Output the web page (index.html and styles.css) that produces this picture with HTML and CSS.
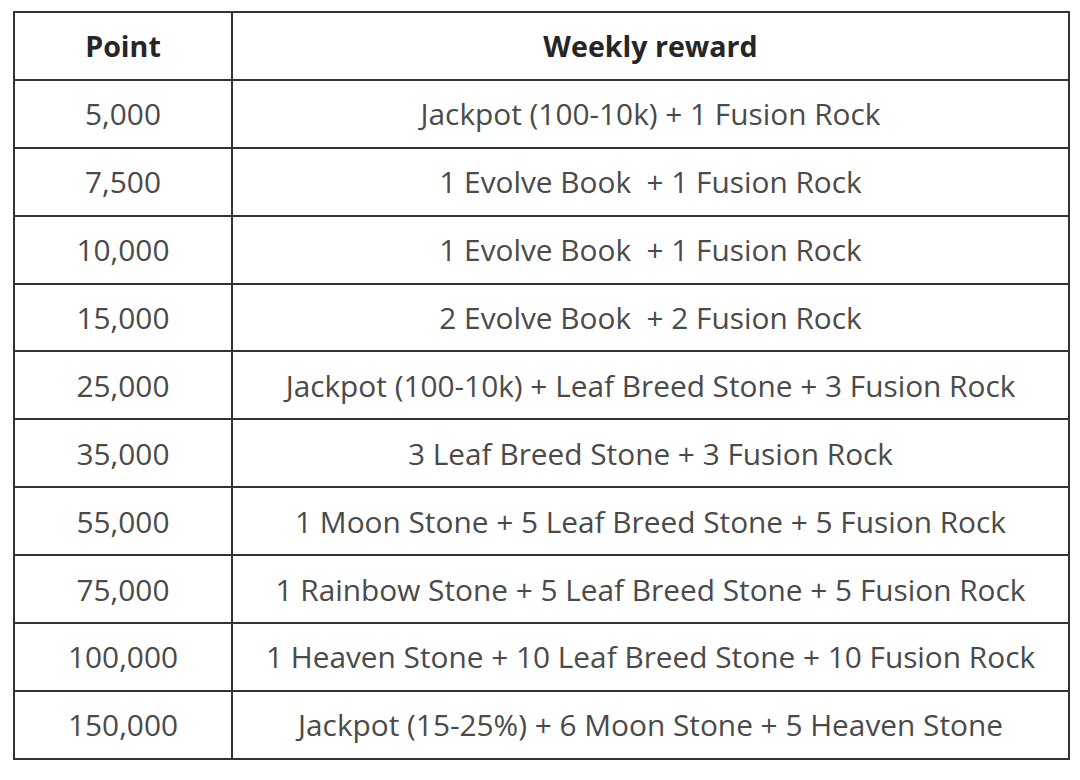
FILE: index.html
```html
<!DOCTYPE html>
<html>
<head>
<meta charset="utf-8">
<link rel="stylesheet" href="styles.css">
</head>
<body>
<table class="rewards">
  <thead>
    <tr><th class="pt">Point</th><th>Weekly reward</th></tr>
  </thead>
  <tbody>
    <tr><td>5,000</td><td>Jackpot (100-10k) + 1 Fusion Rock</td></tr>
    <tr><td>7,500</td><td>1 Evolve Book&nbsp; + 1 Fusion Rock</td></tr>
    <tr><td>10,000</td><td>1 Evolve Book&nbsp; + 1 Fusion Rock</td></tr>
    <tr><td>15,000</td><td>2 Evolve Book&nbsp; + 2 Fusion Rock</td></tr>
    <tr><td>25,000</td><td>Jackpot (100-10k) + Leaf Breed Stone + 3 Fusion Rock</td></tr>
    <tr><td>35,000</td><td>3 Leaf Breed Stone + 3 Fusion Rock</td></tr>
    <tr><td>55,000</td><td>1 Moon Stone + 5 Leaf Breed Stone + 5 Fusion Rock</td></tr>
    <tr><td>75,000</td><td>1 Rainbow Stone + 5 Leaf Breed Stone + 5 Fusion Rock</td></tr>
    <tr><td>100,000</td><td>1 Heaven Stone + 10 Leaf Breed Stone + 10 Fusion Rock</td></tr>
    <tr><td>150,000</td><td>Jackpot (15-25%) + 6 Moon Stone + 5 Heaven Stone</td></tr>
  </tbody>
</table>
</body>
</html>
```
FILE: styles.css
```css
html, body {
  margin: 0;
  padding: 0;
  background: #ffffff;
}
body {
  padding: 11px 0 0 13px;
  font-family: "Open Sans", "Noto Sans", sans-serif;
}
.rewards {
  border-collapse: collapse;
  width: 1057px;
  table-layout: fixed;
}
.rewards th, .rewards td {
  border: 2px solid #333333;
  height: 65.9px;
  padding: 0;
  text-align: center;
  vertical-align: middle;
  font-size: 29.8px;
  color: #4a4a4a;
  white-space: nowrap;
}
.rewards th {
  font-weight: 700;
  color: #262626;
  font-size: 28.6px;
}
.rewards .pt {
  width: 216px;
}
```
